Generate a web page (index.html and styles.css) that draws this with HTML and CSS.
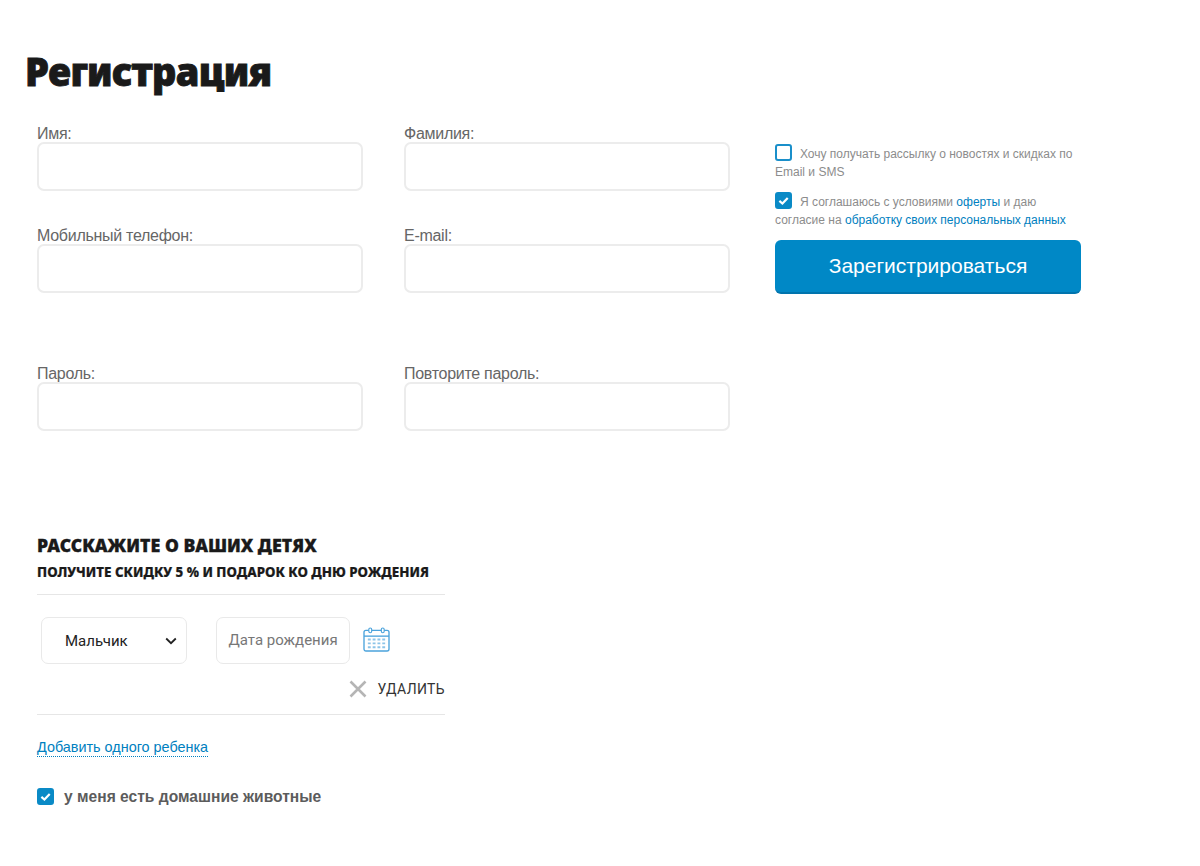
FILE: index.html
```html
<!DOCTYPE html>
<html lang="ru">
<head>
<meta charset="utf-8">
<title>Регистрация</title>
<link rel="stylesheet" href="styles.css">
</head>
<body>
<main class="page">
  <h1 class="title">Регистрация</h1>
  <div class="top">
    <form class="fields">
      <div class="field"><label class="label">Имя:</label><div class="input"></div></div>
      <div class="field"><label class="label">Фамилия:</label><div class="input"></div></div>
      <div class="field"><label class="label">Мобильный телефон:</label><div class="input"></div></div>
      <div class="field"><label class="label">E-mail:</label><div class="input"></div></div>
      <div class="field"><label class="label">Пароль:</label><div class="input"></div></div>
      <div class="field"><label class="label">Повторите пароль:</label><div class="input"></div></div>
    </form>
    <aside class="side">
      <p class="agree"><span class="check"></span>Хочу получать рассылку о новостях и скидках по Email и SMS</p>
      <p class="agree"><span class="check on"><svg viewBox="0 0 12 12" class="tick"><path d="M2.2 6.3 L5 8.8 L9.9 3.6"/></svg></span>Я соглашаюсь с условиями <a class="link">оферты</a> и даю согласие на <a class="link">обработку своих персональных данных</a></p>
      <button class="submit" type="button">Зарегистрироваться</button>
    </aside>
  </div>
  <section class="kids">
    <h2 class="kids-title">Расскажите о ваших детях</h2>
    <h3 class="kids-sub">Получите скидку 5 % и подарок ко дню рождения</h3>
    <div class="child">
      <div class="child-row">
        <div class="select">Мальчик<svg class="chev" viewBox="0 0 12 8"><path d="M1.2 1.5 L6 6.2 L10.8 1.5"/></svg></div>
        <div class="date">Дата рождения</div>
        <svg class="cal" viewBox="0 0 28 26">
          <rect class="cal-line" x="1" y="3.5" width="26" height="21.5" rx="2"/>
          <path class="cal-line" d="M1 9.5 H27"/>
          <rect class="cal-ring" x="6" y="1" width="3" height="5" rx="1.5"/>
          <rect class="cal-ring" x="19" y="1" width="3" height="5" rx="1.5"/>
          <path class="cal-dots" d="M5 13h3M10 13h3M15 13h3M20 13h3M5 17h3M10 17h3M15 17h3M20 17h3M5 21h3M10 21h3M15 21h3M20 21h3"/>
        </svg>
      </div>
      <div class="remove"><svg class="x" viewBox="0 0 18 18"><path d="M1.5 1.5 L16.5 16.5 M16.5 1.5 L1.5 16.5"/></svg>УДАЛИТЬ</div>
    </div>
    <a class="add">Добавить одного ребенка</a>
    <div class="pets"><span class="check on"><svg viewBox="0 0 12 12" class="tick"><path d="M2.2 6.3 L5 8.8 L9.9 3.6"/></svg></span>у меня есть домашние животные</div>
  </section>
</main>
</body>
</html>
```
FILE: styles.css
```css
* { box-sizing: border-box; }
html, body { margin: 0; background: #fff; }
body { font-family: "Liberation Sans", Arial, sans-serif; color: #555; }
.page { width: 1200px; height: 866px; padding: 47px 0 0 26px; overflow: hidden; }
.title { margin: 0 0 0 -1px; font: 900 38px/48px "Noto Sans", sans-serif; color: #1a1a1a; letter-spacing: -0.65px; -webkit-text-stroke: 0.9px #1a1a1a; }
.top { display: flex; margin: 29px 0 0 11px; }
.fields { display: grid; grid-template-columns: 325.5px 325.5px; column-gap: 41.5px; row-gap: 35px; width: 692.5px; }
.field { display: block; height: 67px; }
.fields .field:nth-child(n+5) { margin-top: 36px; }
.label { display: block; font-size: 16px; letter-spacing: -0.28px; line-height: 18px; padding-top: 1px; height: 18px; color: #666; }
.input { height: 49px; border: 2px solid #ececec; border-radius: 7px; background: #fff; }
.side { width: 306px; margin-left: 45.5px; padding-top: 20px; }
.agree { margin: 0 0 11px; font-size: 12px; line-height: 18px; color: #8c8c8c; }
.check { display: inline-block; width: 17px; height: 17px; margin-right: 8px; vertical-align: -3px; border: 2px solid #1a8fca; border-radius: 3px; background: #fff; }
.check.on { background: #0a8ac6; border-color: #0a8ac6; }
.tick { display: block; width: 13px; height: 13px; }
.tick path { fill: none; stroke: #fff; stroke-width: 2; }
.link { color: #0080c0; }
.submit { display: block; width: 306px; height: 54px; margin-top: -0.5px; border: 0; border-bottom: 2px solid #0074ad; border-radius: 6px; background: #0088c6; color: #fff; font: 21px "Liberation Sans", Arial, sans-serif; }
.kids { width: 408px; margin: 102px 0 0 11px; }
.kids-title { margin: 0; font: 900 17.6px/24px "Noto Sans", sans-serif; color: #1a1a1a; text-transform: uppercase; -webkit-text-stroke: 0.3px #1a1a1a; }
.kids-sub { margin: 5px 0 0; font: 800 13.3px/20px "Noto Sans", sans-serif; color: #1a1a1a; text-transform: uppercase; -webkit-text-stroke: 0.2px #1a1a1a; }
.child { margin-top: 12px; border-top: 1px solid #e6e6e6; border-bottom: 1px solid #e6e6e6; height: 121px; padding: 22px 0 0 4px; }
.child-row { display: flex; align-items: center; }
.select { display: flex; align-items: center; justify-content: space-between; width: 146px; height: 47px; padding: 0 9px 0 23px; border: 1px solid #e9e9e9; border-radius: 7px; font: 15px "Roboto", sans-serif; color: #222; }
.chev { width: 12px; height: 8px; }
.chev path { fill: none; stroke: #222; stroke-width: 1.8; }
.date { width: 134px; height: 47px; margin-left: 29px; padding-left: 11.5px; border: 1px solid #e9e9e9; border-radius: 7px; font: 15px/45px "Roboto", sans-serif; color: #777; white-space: nowrap; }
.cal { width: 27px; height: 25px; margin: -3px 0 0 13px; }
.cal-line { fill: none; stroke: #4ba3dc; stroke-width: 1.4; }
.cal-ring { fill: #fff; stroke: #4ba3dc; stroke-width: 1.2; }
.cal-dots { fill: none; stroke: #8cc4e8; stroke-width: 2; }
.remove { display: flex; align-items: center; justify-content: flex-end; height: 20px; margin-top: 15px; font: 14px/20px "Roboto", sans-serif; letter-spacing: .35px; color: #333; }
.x { width: 18px; height: 18px; margin-right: 10px; }
.x path { fill: none; stroke: #b5b5b5; stroke-width: 2.6; }
.add { display: inline-block; margin-top: 24px; font-size: 14.4px; line-height: 17px; color: #0080c0; border-bottom: 1px dotted #0080c0; }
.pets { margin-top: 31px; font-size: 15.6px; font-weight: 700; line-height: 18px; color: #5c5c5c; }
.pets .check { margin-right: 10px; }
```
